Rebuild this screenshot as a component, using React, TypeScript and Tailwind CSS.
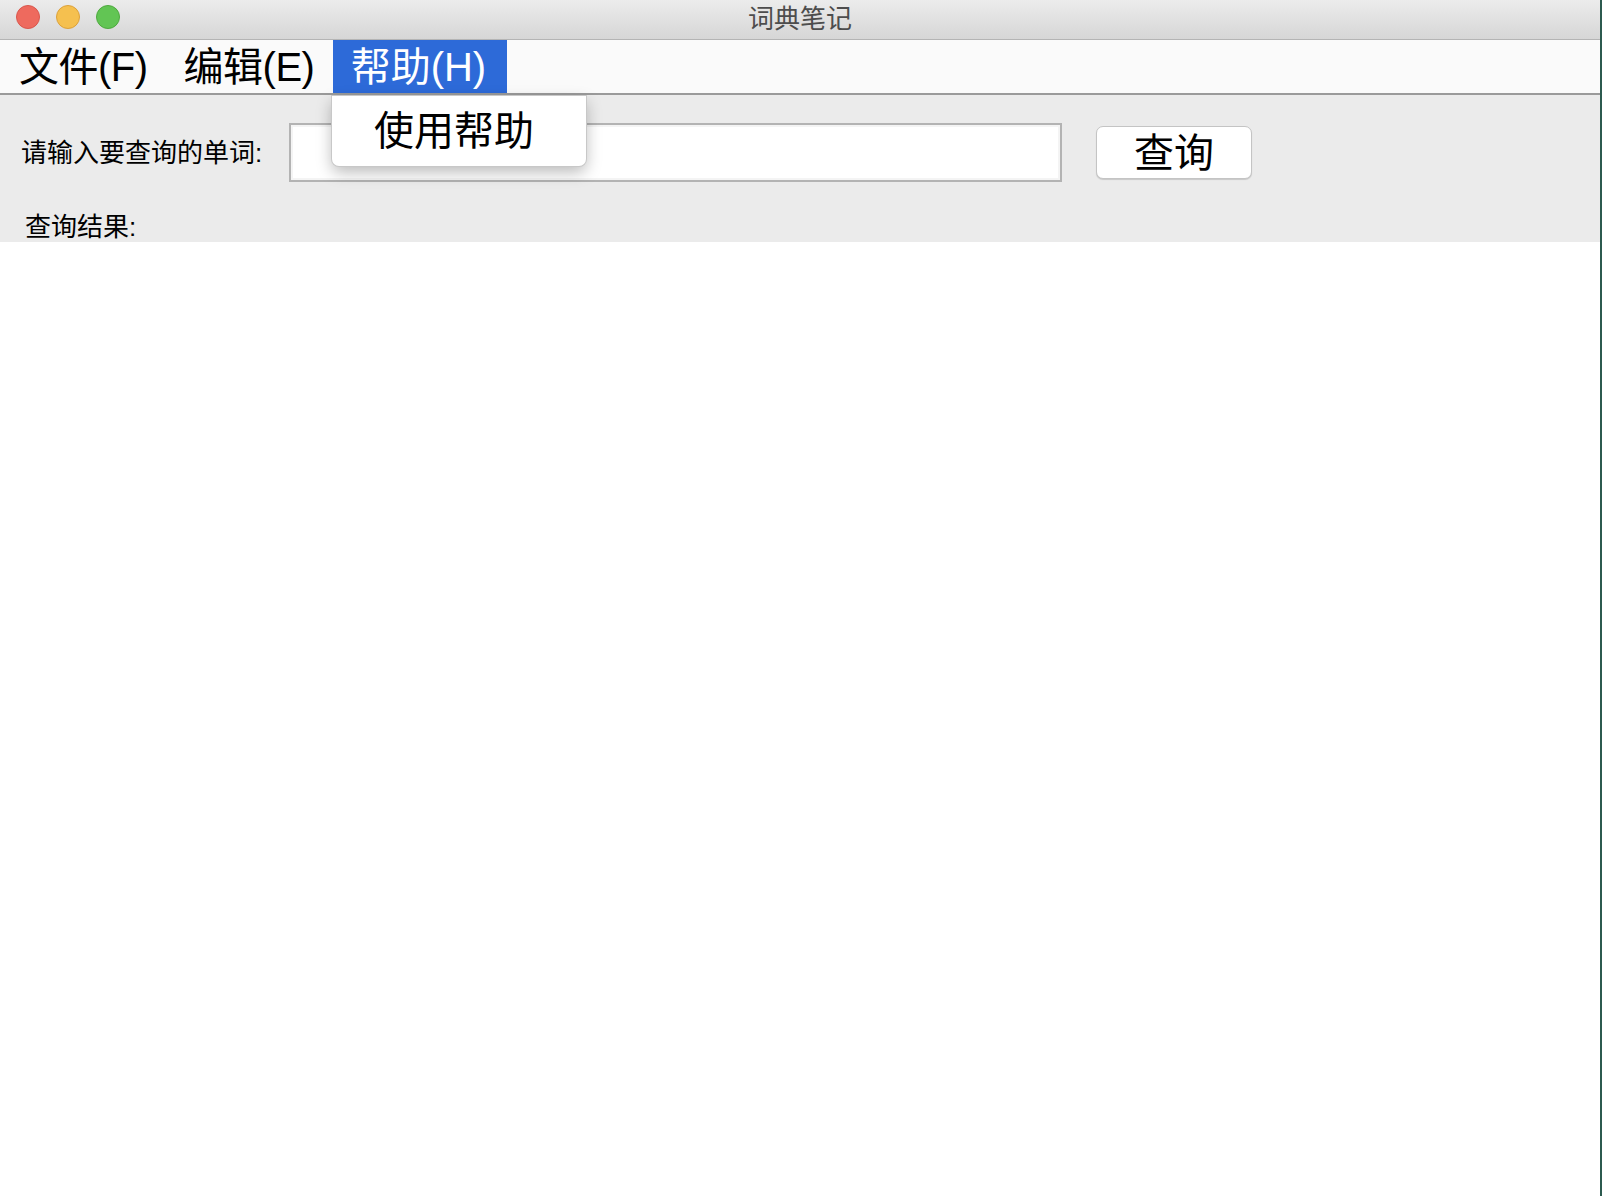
import React from "react";

const font = { fontFamily: '"Liberation Sans", "Noto Sans CJK SC", sans-serif' };

function TrafficLights() {
  return (
    <div className="flex items-center gap-[16px] pl-[16px] pb-[5px]">
      <span className="h-[24px] w-[24px] rounded-full border border-[#d9574d] bg-[#ee6a5e]" />
      <span className="h-[24px] w-[24px] rounded-full border border-[#dca13b] bg-[#f5c04f]" />
      <span className="h-[24px] w-[24px] rounded-full border border-[#4fa93f] bg-[#62c554]" />
    </div>
  );
}

export default function App() {
  return (
    <div className="flex h-[1196px] w-[1602px] overflow-hidden bg-white" style={font}>
      <div className="relative flex w-[1600px] flex-col">
        {/* title bar */}
        <div className="relative flex h-[40px] items-center border-b border-[#b4b4b4] bg-gradient-to-b from-[#ececec] to-[#d6d6d6]">
          <TrafficLights />
          <div className="absolute inset-x-0 top-[2px] text-center text-[26px] leading-[34px] text-[#4d4d4d]">
            词典笔记
          </div>
        </div>

        {/* menu bar */}
        <div className="flex h-[55px] items-stretch border-b-2 border-[#9a9a9a] bg-[#fafafa] text-[40px] leading-none text-black">
          <div className="flex items-center pl-[19px] pr-[36px] tracking-[-0.5px]">文件(F)</div>
          <div className="flex items-center pr-[19px] tracking-[-0.5px]">编辑(E)</div>
          <div className="flex w-[174px] items-center justify-center bg-[#2d6ad8] pr-[4px] text-white">帮助(H)</div>
        </div>

        {/* form area */}
        <div className="flex h-[147px] flex-col bg-[#ebebeb]">
          <div className="flex items-center pt-[28px]">
            <div className="w-[289px] pl-[21px] text-[26px] leading-none text-black">请输入要查询的单词:</div>
            <div className="h-[59px] w-[773px] border-2 border-[#b3b3b3] bg-white shadow-[inset_0_0_0_2px_#f4f4f4]" />
            <button className="ml-[34px] h-[53px] w-[156px] rounded-[7px] border border-[#c4c4c4] bg-white text-[40px] leading-none text-black shadow-[0_1px_1px_rgba(0,0,0,0.15)]">
              查询
            </button>
          </div>
          <div className="pl-[25px] pt-[32px] text-[26px] leading-none text-black">查询结果:</div>
        </div>

        <div className="flex-1 bg-white" />

        {/* dropdown menu */}
        <div className="absolute left-[332px] top-[96px] flex h-[70px] w-[254px] items-center justify-center rounded-b-[7px] bg-white pr-[10px] text-[40px] leading-none text-black shadow-[0_6px_16px_rgba(0,0,0,0.28)] ring-1 ring-[#c8c8c8]">
          使用帮助
        </div>
      </div>
      <div className="w-[2px] bg-[#2c5a4f]" />
    </div>
  );
}
